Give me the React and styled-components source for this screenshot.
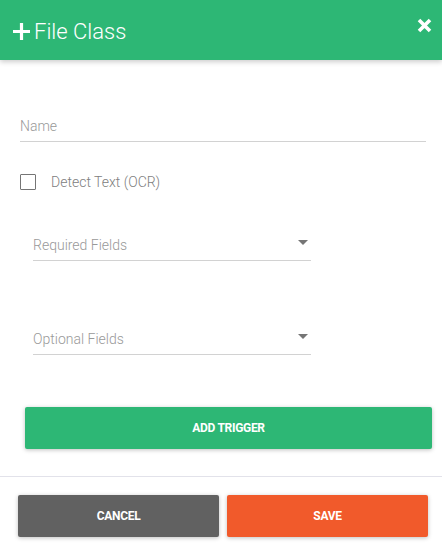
import React, { useState } from "react";
import styled, { createGlobalStyle } from "styled-components";

const Global = createGlobalStyle`
  body {
    margin: 0;
    background: #fff;
    font-family: Roboto, "Liberation Sans", sans-serif;
  }
`;

const Dialog = styled.div`
  width: 442px;
  height: 547px;
  background: #fff;
  display: flex;
  flex-direction: column;
  overflow: hidden;
`;

const Header = styled.div`
  height: 60px;
  flex-shrink: 0;
  background: #2db775;
  display: flex;
  align-items: center;
  justify-content: space-between;
  padding: 0 7px 0 12px;
  box-shadow: 0 2px 5px rgba(0, 0, 0, 0.2);
  position: relative;
  z-index: 1;
`;

const Title = styled.h1`
  margin: 0;
  display: flex;
  align-items: center;
  gap: 3px;
  color: #fff;
  font-size: 22px;
  font-weight: 300;
  padding-top: 3px;
`;

const CloseBtn = styled.button`
  border: 0;
  background: none;
  padding: 0;
  width: 22px;
  height: 22px;
  display: flex;
  align-items: center;
  justify-content: center;
  margin-top: -10px;
  cursor: pointer;
`;

const Body = styled.div`
  padding: 46px 16px 0 20px;
  display: flex;
  flex-direction: column;
`;

const Field = styled.label`
  display: flex;
  align-items: center;
  justify-content: space-between;
  height: 36px;
  border-bottom: 1px solid #d2d2d2;
  margin-left: ${(p) => p.$indent || 0}px;
  width: ${(p) => p.$width || "auto"};
  margin-bottom: ${(p) => p.$gap || 0}px;
  box-sizing: border-box;
  padding-right: 3px;
`;

const Placeholder = styled.span`
  color: #999;
  font-size: 14px;
  font-weight: 300;
  padding-top: 4px;
`;

const CheckRow = styled.label`
  display: flex;
  align-items: center;
  gap: 15px;
  height: 18px;
  margin: 31px 0 34px;
  color: #808080;
  font-size: 14px;
  font-weight: 300;
`;

const Box = styled.span`
  width: 14px;
  height: 14px;
  border: 1px solid #757575;
  border-radius: 1px;
  background: ${(p) => (p.$on ? "#2db775" : "#fff")};
`;

const Button = styled.button`
  border: 0;
  border-radius: 2px;
  background: ${(p) => p.$bg};
  color: #fff;
  font-family: Roboto, "Liberation Sans", sans-serif;
  font-size: 12px;
  font-weight: 700;
  letter-spacing: -0.3px;
  height: 42px;
  box-shadow: 0 1px 4px rgba(0, 0, 0, 0.25);
  cursor: pointer;
`;

const TriggerButton = styled(Button)`
  margin: 52px -6px 0 5px;
`;

const Divider = styled.hr`
  border: 0;
  border-top: 1px solid #e2e2ea;
  margin: 27px 0 0;
  width: 100%;
`;

const Footer = styled.div`
  display: grid;
  grid-template-columns: 201px 201px;
  gap: 8px;
  padding: 18px 0 0 18px;
`;

const Caret = () => (
  <svg width="10" height="5" viewBox="0 0 10 5">
    <path d="M0 0h10L5 5z" fill="#757575" />
  </svg>
);

export default function App() {
  const [ocr, setOcr] = useState(false);
  return (
    <Dialog>
      <Global />
      <Header>
        <Title>
          <svg width="19" height="19" viewBox="0 0 19 19">
            <path d="M9.5 1v17M1 9.5h17" stroke="#fff" strokeWidth="3.2" />
          </svg>
          File Class
        </Title>
        <CloseBtn aria-label="close">
          <svg width="15" height="15" viewBox="0 0 15 15">
            <path d="M2 2l11 11M13 2L2 13" stroke="#fff" strokeWidth="3.6" />
          </svg>
        </CloseBtn>
      </Header>
      <Body>
        <Field>
          <Placeholder>Name</Placeholder>
        </Field>
        <CheckRow onClick={() => setOcr(!ocr)}>
          <Box $on={ocr} />
          Detect Text (OCR)
        </CheckRow>
        <Field $indent={13} $width="278px" $gap={58}>
          <Placeholder>Required Fields</Placeholder>
          <Caret />
        </Field>
        <Field $indent={13} $width="278px">
          <Placeholder>Optional Fields</Placeholder>
          <Caret />
        </Field>
        <TriggerButton $bg="#2db775">ADD TRIGGER</TriggerButton>
      </Body>
      <Divider />
      <Footer>
        <Button $bg="#616161">CANCEL</Button>
        <Button $bg="#f15a2b">SAVE</Button>
      </Footer>
    </Dialog>
  );
}
